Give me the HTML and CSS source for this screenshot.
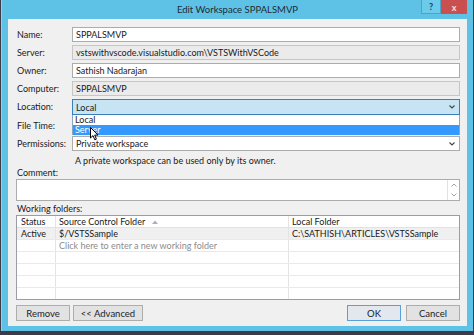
FILE: index.html
```html
<!DOCTYPE html>
<html lang="en">
<head>
    <meta charset="UTF-8">
    <title>Edit Workspace SPPALSMVP</title>
    <link rel="stylesheet" href="styles.css">
</head>
<body>
    <div class="window">
        <div class="titlebar">
            <span class="title">Edit Workspace SPPALSMVP</span>
            <div class="caption-btns">
                <span class="cap-btn help">?</span>
                <span class="cap-btn close">x</span>
            </div>
        </div>

        <div class="client">
            <div class="form">
                <label>Name:</label>
                <div class="input">SPPALSMVP</div>

                <label>Server:</label>
                <div class="input readonly">vstswithvscode.visualstudio.com\VSTSWithVSCode</div>

                <label>Owner:</label>
                <div class="input">Sathish Nadarajan</div>

                <label>Computer:</label>
                <div class="input readonly">SPPALSMVP</div>

                <label>Location:</label>
                <div class="combo focused">
                    <span>Local</span>
                    <svg class="chev" width="6" height="4" viewBox="0 0 6 4"><path d="M0.5 0.5 L3 3 L5.5 0.5" fill="none" stroke="#444" stroke-width="1.1"/></svg>
                    <div class="droplist">
                        <div class="opt">Local</div>
                        <div class="opt selected">Server</div>
                        <svg class="cursor" width="9" height="14" viewBox="0 0 9 14">
                            <path d="M0.5 0.5 L0.5 11 L3 8.6 L4.8 12.8 L6.4 12.1 L4.7 8.1 L8 8.1 Z" fill="#fff" stroke="#000" stroke-width="1"/>
                        </svg>
                    </div>
                </div>

                <label>File Time:</label>
                <div class="combo"><span></span></div>

                <label>Permissions:</label>
                <div class="combo">
                    <span>Private workspace</span>
                    <svg class="chev" width="6" height="4" viewBox="0 0 6 4"><path d="M0.5 0.5 L3 3 L5.5 0.5" fill="none" stroke="#444" stroke-width="1.1"/></svg>
                </div>

                <span></span>
                <div class="hint">A private workspace can be used only by its owner.</div>
            </div>

            <div class="section-label">Comment:</div>
            <div class="textarea">
                <div class="vscroll">
                    <svg width="6" height="4" viewBox="0 0 6 4"><path d="M0.5 3.5 L3 1 L5.5 3.5" fill="none" stroke="#a0a0a0" stroke-width="1"/></svg>
                    <svg width="6" height="4" viewBox="0 0 6 4"><path d="M0.5 0.5 L3 3 L5.5 0.5" fill="none" stroke="#a0a0a0" stroke-width="1"/></svg>
                </div>
            </div>

            <div class="section-label">Working folders:</div>
            <div class="grid">
                <div class="row head">
                    <div class="c1">Status</div>
                    <div class="c2">Source Control Folder <svg class="sort" width="6" height="4" viewBox="0 0 6 4"><path d="M0 4 L3 0.5 L6 4 Z" fill="#a8b0b8"/></svg></div>
                    <div class="c3">Local Folder</div>
                </div>
                <div class="row active">
                    <div class="c1">Active</div>
                    <div class="c2">$/VSTSSample</div>
                    <div class="c3">C:\SATHISH\ARTICLES\VSTSSample</div>
                </div>
                <div class="row">
                    <div class="c1"></div>
                    <div class="c2 placeholder">Click here to enter a new working folder</div>
                    <div class="c3"></div>
                </div>
                <div class="row"><div class="c1"></div><div class="c2"></div><div class="c3"></div></div>
                <div class="row"><div class="c1"></div><div class="c2"></div><div class="c3"></div></div>
                <div class="row"><div class="c1"></div><div class="c2"></div><div class="c3"></div></div>
                <div class="row last"><div class="c1"></div><div class="c2"></div><div class="c3"></div></div>
            </div>

            <div class="buttons">
                <button class="btn">Remove</button>
                <button class="btn wide">&lt;&lt; Advanced</button>
                <span class="spacer"></span>
                <button class="btn default">OK</button>
                <button class="btn">Cancel</button>
            </div>
        </div>
    </div>
</body>
</html>
```

FILE: styles.css
```css
* {
    box-sizing: border-box;
}

body {
    margin: 0;
    width: 474px;
    height: 335px;
    overflow: hidden;
    background: #3d3b48;
    font-family: Lato, "Noto Sans", sans-serif;
    font-size: 9px;
    color: #1a1a1a;
}

.window {
    width: 472px;
    height: 331px;
    margin-left: 1px;
    background: #5ec2e6;
    border-left: 1px solid #8fd3ee;
    padding: 0 6px 5px 6px;
    display: flex;
    flex-direction: column;
}

/* title bar */
.titlebar {
    height: 19px;
    display: flex;
    align-items: center;
    justify-content: center;
    position: relative;
}

.title {
    font-size: 9.5px;
    color: #1e2a33;
    margin-top: -1px;
}

.caption-btns {
    position: absolute;
    right: 0;
    top: 0;
    display: flex;
}

.cap-btn {
    height: 14px;
    display: flex;
    align-items: center;
    justify-content: center;
    font-weight: bold;
    font-size: 9px;
}

.help {
    width: 20px;
    color: #1b3d5a;
    border: 1px solid #4aa6c8;
    border-top: none;
    background: #6ccaea;
}

.close {
    width: 26px;
    background: #c9504f;
    color: #f4e0e0;
}

/* client area */
.client {
    flex: 1;
    background: #f0f0f0;
    padding: 8px 7px 0 8px;
}

.form {
    display: grid;
    grid-template-columns: 56px 1fr;
    row-gap: 3px;
    align-items: center;
    position: relative;
}

.form label {
    padding-left: 1px;
    line-height: 12px;
}

.input {
    height: 15px;
    border: 1px solid #acacac;
    background: #fff;
    padding: 0 3px;
    line-height: 13px;
    white-space: nowrap;
}

.input.readonly {
    background: #ebebeb;
    border-color: #c6c6c6;
}

.combo {
    height: 15px;
    border: 1px solid #acacac;
    background: #fff;
    padding: 0 4px 0 3px;
    line-height: 13px;
    display: flex;
    justify-content: space-between;
    align-items: center;
    position: relative;
}

.combo.focused {
    height: 16px;
    background: #c7e4f5;
    border-color: #3a7fb8;
}

.droplist {
    position: absolute;
    left: -1px;
    right: -1px;
    top: 15px;
    background: #fff;
    border-left: 1px solid #8aa6bc;
    border-right: 1px solid #8aa6bc;
    z-index: 2;
}

.opt {
    height: 10px;
    line-height: 10px;
    padding-left: 2px;
}

.opt.selected {
    background: #3399ff;
    color: #fff;
}

.cursor {
    position: absolute;
    left: 17px;
    top: 12px;
}

.hint {
    padding: 1px 0 0 3px;
    height: 13px;
    line-height: 12px;
}

.section-label {
    height: 12px;
    line-height: 11px;
    padding-left: 1px;
}

.textarea {
    height: 22px;
    margin-bottom: 2px;
    border: 1px solid #acacac;
    background: #fff;
    display: flex;
    justify-content: flex-end;
}

.vscroll {
    width: 12px;
    display: flex;
    flex-direction: column;
    align-items: center;
    justify-content: space-around;
    border-left: 1px solid #e2e2e2;
}

/* working folders */
.grid {
    height: 85px;
    border: 1px solid #9a9da3;
    background: #fff;
}

.row {
    display: flex;
    height: 12px;
    line-height: 11px;
    border-bottom: 1px solid #e9e9e9;
}

.row.last {
    border-bottom: none;
    height: 11px;
}

.row.head {
    border-bottom-color: #e2e2e2;
}

.row.active {
    background: #f0f0f0;
}

.c1 {
    width: 39px;
    padding-left: 4px;
    border-right: 1px solid #e4e4e4;
}

.c2 {
    width: 233px;
    padding-left: 3px;
    border-right: 1px solid #e4e4e4;
}

.c3 {
    flex: 1;
    padding-left: 3px;
}

.sort {
    margin-left: 5px;
    vertical-align: 1px;
}

.placeholder {
    color: #8c8c8c;
}

.buttons {
    display: flex;
    gap: 3px;
    margin-top: 5px;
}

.spacer {
    flex: 1;
}

.btn {
    width: 54px;
    height: 16px;
    padding: 0;
    font-family: inherit;
    font-size: 9.5px;
    color: #222;
    background: #e2e2e2;
    border: 1px solid #adadad;
}

.btn.wide {
    width: 70px;
}

.btn.default {
    border-color: #5aa0d8;
    background: #e3e8ee;
    margin-right: 2px;
}
```
